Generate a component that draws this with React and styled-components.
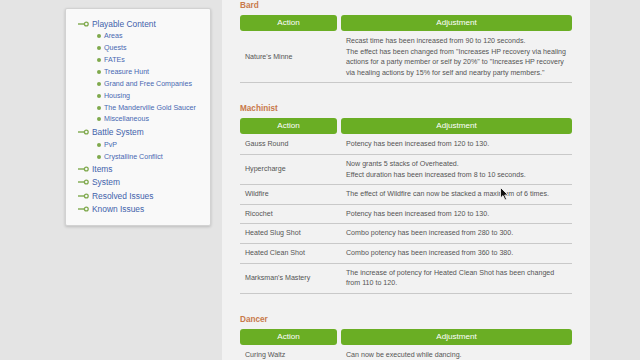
import React from 'react';
import styled, { createGlobalStyle } from 'styled-components';

const GlobalStyle = createGlobalStyle`
  html, body {
    margin: 0;
    padding: 0;
    background: #e4e4e4;
    font-family: "Liberation Sans", Arial, sans-serif;
    overflow: hidden;
  }
`;

const nav = [
  {
    label: 'Playable Content',
    children: ['Areas', 'Quests', 'FATEs', 'Treasure Hunt', 'Grand and Free Companies', 'Housing', 'The Manderville Gold Saucer', 'Miscellaneous'],
  },
  { label: 'Battle System', children: ['PvP', 'Crystalline Conflict'] },
  { label: 'Items' },
  { label: 'System' },
  { label: 'Resolved Issues' },
  { label: 'Known Issues' },
];

const jobs = [
  {
    name: 'Bard',
    rows: [
      {
        action: "Nature's Minne",
        lines: [
          'Recast time has been increased from 90 to 120 seconds.',
          'The effect has been changed from "Increases HP recovery via healing actions for a party member or self by 20%" to "Increases HP recovery via healing actions by 15% for self and nearby party members."',
        ],
      },
    ],
  },
  {
    name: 'Machinist',
    rows: [
      { action: 'Gauss Round', lines: ['Potency has been increased from 120 to 130.'] },
      { action: 'Hypercharge', lines: ['Now grants 5 stacks of Overheated.', 'Effect duration has been increased from 8 to 10 seconds.'] },
      { action: 'Wildfire', lines: ['The effect of Wildfire can now be stacked a maximum of 6 times.'] },
      { action: 'Ricochet', lines: ['Potency has been increased from 120 to 130.'] },
      { action: 'Heated Slug Shot', lines: ['Combo potency has been increased from 280 to 300.'] },
      { action: 'Heated Clean Shot', lines: ['Combo potency has been increased from 360 to 380.'] },
      { action: "Marksman's Mastery", lines: ['The increase of potency for Heated Clean Shot has been changed from 110 to 120.'] },
    ],
  },
  {
    name: 'Dancer',
    rows: [{ action: 'Curing Waltz', lines: ['Can now be executed while dancing.'] }],
  },
];

const BranchIcon = () => (
  <svg width="11" height="6" viewBox="0 0 11 6">
    <line x1="0" y1="3" x2="6.5" y2="3" stroke="#7fa94c" strokeWidth="1.4" />
    <circle cx="8.3" cy="3" r="1.9" fill="none" stroke="#7fa94c" strokeWidth="1.3" />
  </svg>
);

const Cursor = () => (
  <CursorWrap>
    <svg width="9" height="14" viewBox="0 0 9 14">
      <path d="M0.5 0.5 L0.5 11 L3 8.6 L5 13 L6.6 12.3 L4.7 8 L8 8 Z" fill="#111" stroke="#fff" strokeWidth="0.8" />
    </svg>
  </CursorWrap>
);

export default function App() {
  return (
    <>
      <GlobalStyle />
      <Page>
        <Sidebar>
          {nav.map((item) => (
            <NavGroup key={item.label}>
              <TopItem>
                <BranchIcon />
                <span>{item.label}</span>
              </TopItem>
              {item.children &&
                item.children.map((c) => (
                  <SubItem key={c}>
                    <Dot />
                    <span>{c}</span>
                  </SubItem>
                ))}
            </NavGroup>
          ))}
        </Sidebar>
        <Main>
          {jobs.map((job) => (
            <Section key={job.name}>
              <JobTitle>{job.name}</JobTitle>
              <Table>
                <HeadCell>Action</HeadCell>
                <HeadCell>Adjustment</HeadCell>
                {job.rows.map((r) => (
                  <Row key={r.action}>
                    <ActionCell>{r.action}</ActionCell>
                    <AdjCell>
                      {r.lines.map((l, i) => (
                        <div key={i}>{l}</div>
                      ))}
                    </AdjCell>
                  </Row>
                ))}
              </Table>
            </Section>
          ))}
          <Cursor />
        </Main>
      </Page>
    </>
  );
}

const Page = styled.div`
  display: flex;
  align-items: flex-start;
  gap: 11px;
  padding-left: 65px;
  height: 360px;
  overflow: hidden;
`;

const Sidebar = styled.nav`
  width: 146px;
  box-sizing: border-box;
  margin-top: 8px;
  padding: 8px 0 9px 12px;
  background: #f9f9f9;
  border: 1px solid #d2d2d2;
  border-radius: 2px;
  box-shadow: 0 1px 3px rgba(0, 0, 0, 0.18);
`;

const NavGroup = styled.div`
  display: flex;
  flex-direction: column;
`;

const TopItem = styled.div`
  display: flex;
  align-items: center;
  gap: 3px;
  height: 13.3px;
  font-size: 8.4px;
  color: #4262ab;
`;

const SubItem = styled.div`
  display: flex;
  align-items: center;
  gap: 3px;
  height: 11.9px;
  padding-left: 19px;
  font-size: 7.1px;
  color: #4868b2;
`;

const Dot = styled.span`
  width: 4px;
  height: 4px;
  border-radius: 50%;
  background: #7fa94c;
`;

const Main = styled.main`
  position: relative;
  width: 368px;
  height: 360px;
  box-sizing: border-box;
  padding: 0 18px;
  background: #f2f2f2;
`;

const Section = styled.section`
  margin-bottom: 20px;
`;

const JobTitle = styled.div`
  font-size: 8.2px;
  font-weight: bold;
  color: #c8794a;
  height: 13px;
  line-height: 11px;
  padding-bottom: 2px;
`;

const Table = styled.div`
  display: grid;
  grid-template-columns: 97px 1fr;
  column-gap: 4px;
`;

const HeadCell = styled.div`
  height: 16px;
  line-height: 16px;
  background: #6aae24;
  color: #fff;
  font-size: 8.1px;
  text-align: center;
  border-radius: 3px;
  margin-bottom: 1px;
`;

const Row = styled.div`
  grid-column: 1 / -1;
  display: grid;
  grid-template-columns: 97px 1fr;
  column-gap: 4px;
  align-items: center;
  border-bottom: 1px solid #c9c9c9;
  padding: 4px 0;
  font-size: 7.1px;
  line-height: 10.6px;
  color: #555;
`;

const ActionCell = styled.div`
  padding-left: 5px;
`;

const AdjCell = styled.div`
  padding: 0 3px 0 5px;
`;

const CursorWrap = styled.div`
  position: absolute;
  left: 278px;
  top: 187px;
  line-height: 0;
`;
